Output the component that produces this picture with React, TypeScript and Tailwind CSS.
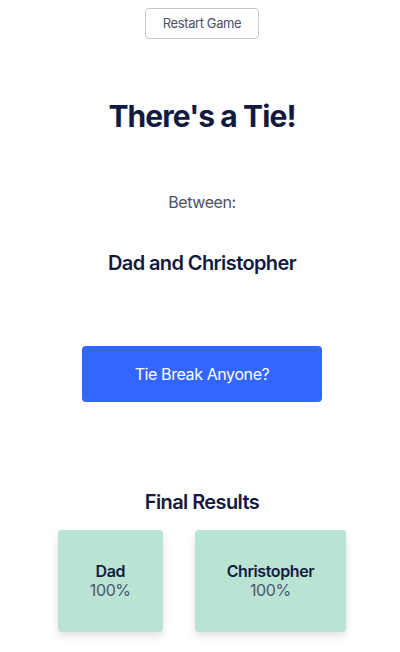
const results = [
  { name: "Dad", pct: "100%" },
  { name: "Christopher", pct: "100%" },
];

export default function App() {
  return (
    <div className="min-h-[652px] bg-white pl-1 font-['Inter',sans-serif] tracking-[-0.025em] flex flex-col items-center text-center">
      <button className="mt-2 h-[31px] w-[114px] rounded-[4px] border border-[#c6c9d4] text-[13px] text-[#4a5068] bg-white">
        Restart Game
      </button>

      <h1 className="mt-[59px] text-[30px] leading-[36px] font-bold tracking-[-0.03em] text-[#131a40]">
        There's a Tie!
      </h1>

      <p className="mt-[56px] text-base leading-6 text-[#4a5068]">Between:</p>

      <p className="mt-[35px] text-[20px] leading-7 font-semibold tracking-[-0.03em] text-[#131a40]">
        Dad and Christopher
      </p>

      <button className="mt-[69px] h-14 w-[240px] rounded-[4px] bg-[#3366ff] text-white text-base">
        Tie Break Anyone?
      </button>

      <h2 className="mt-[86px] text-[20px] leading-7 font-semibold tracking-[-0.03em] text-[#131a40]">
        Final Results
      </h2>

      <div className="mt-[14px] flex gap-8">
        {results.map((r) => (
          <div
            key={r.name}
            className="h-[102px] px-8 flex flex-col justify-center items-center rounded-[4px] bg-[#b9e4d4] shadow-[0_4px_8px_rgba(0,0,0,0.12)]"
          >
            <span className="text-base leading-[19px] font-semibold text-[#131a40]">
              {r.name}
            </span>
            <span className="text-base leading-[19px] text-[#4a5572]">{r.pct}</span>
          </div>
        ))}
      </div>
    </div>
  );
}
